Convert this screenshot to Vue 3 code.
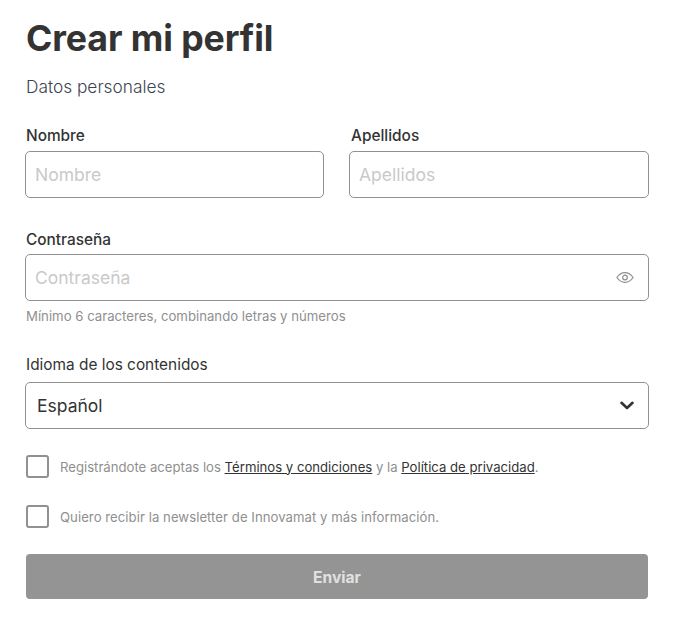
<script setup>
const hint = 'Mínimo 6 caracteres, combinando letras y números'
</script>

<template>
  <main class="page">
    <h1 class="title">Crear mi perfil</h1>
    <p class="subtitle">Datos personales</p>

    <div class="names">
      <div class="field">
        <label class="label">Nombre</label>
        <div class="box placeholder">Nombre</div>
      </div>
      <div class="field">
        <label class="label shifted">Apellidos</label>
        <div class="box placeholder">Apellidos</div>
      </div>
    </div>

    <div class="field password">
      <label class="label short">Contraseña</label>
      <div class="box placeholder between">
        <span>Contraseña</span>
        <svg class="eye" width="18" height="13" viewBox="0 0 20 14" fill="none" stroke="#8f8f8f" stroke-width="1.3">
          <path d="M1 7C3.4 3.4 6.4 1.6 10 1.6S16.6 3.4 19 7C16.6 10.6 13.6 12.4 10 12.4S3.4 10.6 1 7Z" />
          <circle cx="10" cy="7" r="2.6" />
        </svg>
      </div>
      <p class="hint">{{ hint }}</p>
    </div>

    <div class="field language">
      <label class="label regular">Idioma de los contenidos</label>
      <div class="box select between">
        <span>Español</span>
        <svg class="chevron" width="14" height="9" viewBox="0 0 14 9" fill="none" stroke="#333" stroke-width="2.6" stroke-linecap="round" stroke-linejoin="round">
          <path d="M1.5 1.8L7 7L12.5 1.8" />
        </svg>
      </div>
    </div>

    <div class="check first">
      <span class="tick"></span>
      <span>Registrándote aceptas los <a class="link">Términos y condiciones</a> y la <a class="link">Política de privacidad</a>.</span>
    </div>
    <div class="check second">
      <span class="tick"></span>
      <span class="news">Quiero recibir la newsletter de Innovamat y más información.</span>
    </div>

    <button class="send" type="button">Enviar</button>
  </main>
</template>

<style scoped>
.page {
  box-sizing: border-box;
  width: 688px;
  height: 638px;
  padding: 16px 39px 0 25px;
  font-family: Inter, "Liberation Sans", sans-serif;
  color: #333;
  background: #fff;
  overflow: hidden;
}
.title {
  margin: 0 0 0 1px;
  font-size: 35.7px;
  line-height: 44px;
  font-weight: 700;
  letter-spacing: -0.1px;
  color: #333;
}
.subtitle {
  margin: 15px 0 0 1px;
  font-size: 17.3px;
  line-height: 24px;
  font-weight: 300;
  color: #3c4650;
}
.names {
  display: grid;
  grid-template-columns: 299px 300px;
  column-gap: 25px;
  margin-top: 27px;
}
.field {
  display: flex;
  flex-direction: column;
}
.label {
  height: 25px;
  margin-left: 1px;
  font-size: 15.4px;
  line-height: 20px;
  font-weight: 500;
  color: #333;
}
.label.short {
  height: 24px;
}
.label.shifted {
  margin-left: 2px;
}
.label.regular {
  height: 27px;
  font-weight: 400;
}
.box {
  box-sizing: border-box;
  display: flex;
  align-items: center;
  height: 47px;
  padding: 0 9px;
  border: 1px solid #919191;
  border-radius: 5px;
  font-size: 17.5px;
  background: #fff;
}
.placeholder {
  color: #c9c9c9;
}
.between {
  justify-content: space-between;
}
.select {
  padding: 0 14px 0 11px;
  color: #333;
}
.eye {
  margin-right: 5px;
}
.password {
  margin-top: 32px;
}
.hint {
  margin: 7px 0 0 1px;
  font-size: 13.2px;
  line-height: 16px;
  color: #8f8f8f;
}
.language {
  margin-top: 31px;
}
.check {
  display: flex;
  align-items: center;
  gap: 11px;
  height: 23px;
  margin-left: 1px;
  font-size: 13.15px;
  color: #8f8f8f;
}
.first {
  margin-top: 26px;
}
.second {
  margin-top: 27px;
}
.news {
  letter-spacing: 0.05px;
}
.tick {
  box-sizing: border-box;
  flex: none;
  width: 23px;
  height: 23px;
  border: 2px solid #919191;
  border-radius: 3px;
}
.link {
  color: #333;
  text-decoration: underline;
}
.send {
  display: block;
  width: 622px;
  height: 45px;
  margin: 26px 0 0 1px;
  padding: 1px 0 0;
  border: 0;
  border-radius: 4px;
  background: #949494;
  color: #e0e0e0;
  font-family: inherit;
  font-size: 15.6px;
  font-weight: 700;
}
</style>
